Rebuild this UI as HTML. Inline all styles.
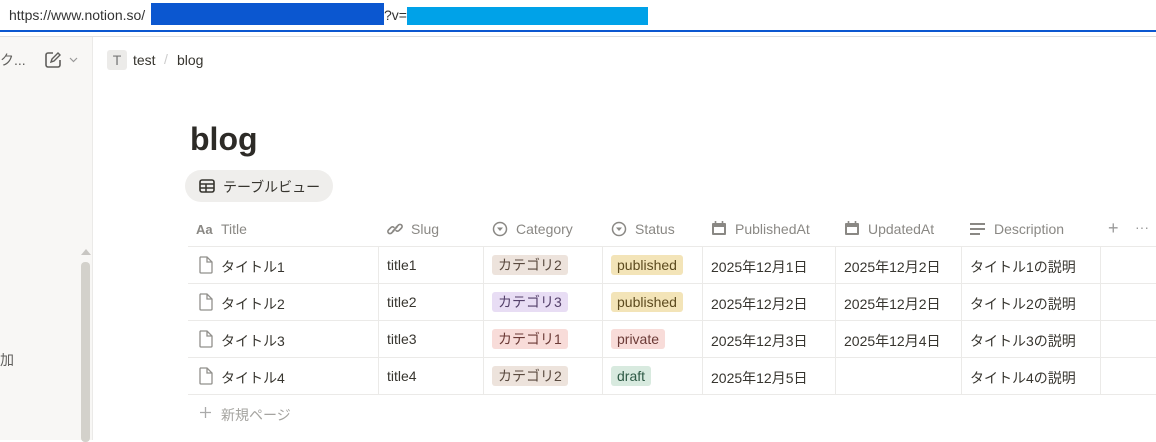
<!DOCTYPE html>
<html><head><meta charset="utf-8"><style>
*{margin:0;padding:0;box-sizing:border-box}
body{width:1156px;height:440px;overflow:hidden;background:#fff;font-family:"Liberation Sans","Noto Sans CJK JP",sans-serif;color:#37352f;position:relative}
.a{position:absolute}
.hd{color:#8a8884;font-size:14px}
.cell{position:absolute;font-size:14px;white-space:nowrap}
.tag{position:absolute;height:20px;line-height:20px;padding:0 6px;border-radius:3px;font-size:14px}
.hl{position:absolute;left:188px;right:0;height:1px;background:#ebeae8}
.vl{position:absolute;width:1px;background:#ebeae8;top:247px;height:147px}
</style></head><body>
<div class="a" style="left:9px;top:7px;font-size:14px;color:#333">https://www.notion.so/</div>
<div class="a" style="left:151px;top:3px;width:233px;height:22px;background:#0b57d0"></div>
<div class="a" style="left:384px;top:7px;font-size:14px;color:#333">?v=</div>
<div class="a" style="left:407px;top:7px;width:241px;height:18px;background:#00a2e8"></div>
<div class="a" style="left:0;top:30px;width:1156px;height:2px;background:#0b57d0"></div>
<div class="a" style="left:0;top:36px;width:1156px;height:1px;background:#e0e0e0"></div>
<div class="a" style="left:0;top:37px;width:93px;height:403px;background:#f8f7f5;border-right:1px solid #ebeae8"></div>
<div class="a" style="left:0;top:50px;font-size:14px;color:#5f5e5b">ク...</div>
<svg class="a" style="left:44px;top:51px" width="18" height="18" viewBox="0 0 18 18"><path d="M9 2H4a2 2 0 0 0-2 2v10a2 2 0 0 0 2 2h10a2 2 0 0 0 2-2V9" fill="none" stroke="#5f5e5b" stroke-width="1.6"/><path d="M7 11l1-3 6-6 2 2-6 6z" fill="none" stroke="#5f5e5b" stroke-width="1.4"/></svg>
<svg class="a" style="left:69px;top:57px" width="9" height="6"><path d="M1 1l3.5 3.5L8 1" fill="none" stroke="#999" stroke-width="1.2"/></svg>
<div class="a" style="left:81px;top:249px;width:0;height:0;border-left:5px solid transparent;border-right:5px solid transparent;border-bottom:6px solid #c8c6c2"></div>
<div class="a" style="left:81px;top:262px;width:9px;height:180px;background:#d3d1cb;border-radius:4px"></div>
<div class="a" style="left:0;top:350px;font-size:14px;color:#5f5e5b">加</div>
<div class="a" style="left:107px;top:50px;width:20px;height:20px;background:#ecebe9;border-radius:3px;font-size:14px;line-height:20px;text-align:center;color:#777">T</div>
<div class="a" style="left:133px;top:52px;font-size:14px">test</div>
<div class="a" style="left:164px;top:51px;font-size:14px;color:#ccc">/</div>
<div class="a" style="left:177px;top:52px;font-size:14px">blog</div>
<div class="a" style="left:190px;top:121px;font-size:32px;font-weight:bold;color:#2d2b27">blog</div>
<div class="a" style="left:185px;top:170px;width:148px;height:32px;background:#efeeec;border-radius:16px"></div>
<svg class="a" style="left:199px;top:179px" width="16" height="14" viewBox="0 0 16 14"><rect x="1" y="1" width="14" height="12" rx="2" fill="none" stroke="#37352f" stroke-width="1.6"/><path d="M1 5h14M1 9h14M7 5v8" stroke="#37352f" stroke-width="1.5"/></svg>
<div class="a" style="left:223px;top:177px;font-size:14px">テーブルビュー</div>
<div class="a" style="left:196px;top:222px;font-size:13px;font-weight:bold;color:#8a8884">Aa</div>
<div class="cell hd" style="left:221px;top:221px">Title</div>
<svg class="a" style="left:387px;top:221px" width="16" height="16" viewBox="0 0 16 16"><path d="M7 9.5l-2.5 2.5a2 2 0 0 1-3-3L4 6.5a2 2 0 0 1 3 0M9 6.5l2.5-2.5a2 2 0 0 1 3 3L12 9.5a2 2 0 0 1-3 0M6 10l4-4" fill="none" stroke="#8a8884" stroke-width="1.6" stroke-linecap="round"/></svg>
<div class="cell hd" style="left:411px;top:221px">Slug</div>
<svg class="a" style="left:492px;top:221px" width="16" height="16"><circle cx="8" cy="8" r="6.5" fill="none" stroke="#8a8884" stroke-width="1.5"/><path d="M5 6.5h6L8 10z" fill="#8a8884"/></svg>
<div class="cell hd" style="left:516px;top:221px">Category</div>
<svg class="a" style="left:611px;top:221px" width="16" height="16"><circle cx="8" cy="8" r="6.5" fill="none" stroke="#8a8884" stroke-width="1.5"/><path d="M5 6.5h6L8 10z" fill="#8a8884"/></svg>
<div class="cell hd" style="left:635px;top:221px">Status</div>
<svg class="a" style="left:711px;top:220px" width="16" height="16"><rect x="1" y="3" width="14" height="12" rx="1" fill="#8a8884"/><rect x="3" y="7" width="10" height="6" fill="#fff"/><path d="M4.5 1v3M11.5 1v3" stroke="#8a8884" stroke-width="1.6"/></svg>
<div class="cell hd" style="left:735px;top:221px">PublishedAt</div>
<svg class="a" style="left:844px;top:220px" width="16" height="16"><rect x="1" y="3" width="14" height="12" rx="1" fill="#8a8884"/><rect x="3" y="7" width="10" height="6" fill="#fff"/><path d="M4.5 1v3M11.5 1v3" stroke="#8a8884" stroke-width="1.6"/></svg>
<div class="cell hd" style="left:868px;top:221px">UpdatedAt</div>
<svg class="a" style="left:970px;top:222px" width="16" height="14"><path d="M0 2h15M0 7h15M0 12h10" stroke="#8a8884" stroke-width="2"/></svg>
<div class="cell hd" style="left:994px;top:221px">Description</div>
<div class="a" style="left:1108px;top:218px;font-size:18px;color:#999">+</div>
<div class="a" style="left:1135px;top:219px;font-size:14px;color:#999">···</div>
<div class="hl" style="top:246px"></div>
<div class="hl" style="top:283px"></div>
<div class="hl" style="top:320px"></div>
<div class="hl" style="top:357px"></div>
<div class="hl" style="top:394px"></div>
<div class="vl" style="left:378px"></div><div class="vl" style="left:483px"></div><div class="vl" style="left:602px"></div><div class="vl" style="left:702px"></div><div class="vl" style="left:835px"></div><div class="vl" style="left:961px"></div><div class="vl" style="left:1100px"></div>

<svg class="a" style="left:198px;top:256px" width="16" height="18"><path d="M2 1h7l5 5v10a1 1 0 0 1-1 1H3a1 1 0 0 1-1-1V2a1 1 0 0 1 1-1zM9 1v5h5" fill="none" stroke="#91908c" stroke-width="1.3"/></svg>
<svg class="a" style="left:198px;top:293px" width="16" height="18"><path d="M2 1h7l5 5v10a1 1 0 0 1-1 1H3a1 1 0 0 1-1-1V2a1 1 0 0 1 1-1zM9 1v5h5" fill="none" stroke="#91908c" stroke-width="1.3"/></svg>
<svg class="a" style="left:198px;top:330px" width="16" height="18"><path d="M2 1h7l5 5v10a1 1 0 0 1-1 1H3a1 1 0 0 1-1-1V2a1 1 0 0 1 1-1zM9 1v5h5" fill="none" stroke="#91908c" stroke-width="1.3"/></svg>
<svg class="a" style="left:198px;top:367px" width="16" height="18"><path d="M2 1h7l5 5v10a1 1 0 0 1-1 1H3a1 1 0 0 1-1-1V2a1 1 0 0 1 1-1zM9 1v5h5" fill="none" stroke="#91908c" stroke-width="1.3"/></svg>
<div class="cell" style="left:221px;top:257px">タイトル1</div>
<div class="cell" style="left:221px;top:294px">タイトル2</div>
<div class="cell" style="left:221px;top:331px">タイトル3</div>
<div class="cell" style="left:221px;top:368px">タイトル4</div>
<div class="cell" style="left:387px;top:257px">title1</div>
<div class="cell" style="left:387px;top:294px">title2</div>
<div class="cell" style="left:387px;top:331px">title3</div>
<div class="cell" style="left:387px;top:368px">title4</div>
<div class="tag" style="left:492px;top:255px;background:#ede3dc;color:#5a4a3f">カテゴリ2</div>
<div class="tag" style="left:492px;top:292px;background:#e8ddf4;color:#54406a">カテゴリ3</div>
<div class="tag" style="left:492px;top:329px;background:#f8dcd9;color:#6b3a36">カテゴリ1</div>
<div class="tag" style="left:492px;top:366px;background:#ede3dc;color:#5a4a3f">カテゴリ2</div>
<div class="tag" style="left:611px;top:255px;background:#f3e4b8;color:#5c4a1e">published</div>
<div class="tag" style="left:611px;top:292px;background:#f3e4b8;color:#5c4a1e">published</div>
<div class="tag" style="left:611px;top:329px;background:#f8dcd9;color:#6b3a36">private</div>
<div class="tag" style="left:611px;top:366px;background:#d8eadf;color:#2e5a45">draft</div>
<div class="cell" style="left:711px;top:257px">2025年12月1日</div>
<div class="cell" style="left:711px;top:294px">2025年12月2日</div>
<div class="cell" style="left:711px;top:331px">2025年12月3日</div>
<div class="cell" style="left:711px;top:368px">2025年12月5日</div>
<div class="cell" style="left:844px;top:257px">2025年12月2日</div>
<div class="cell" style="left:844px;top:294px">2025年12月2日</div>
<div class="cell" style="left:844px;top:331px">2025年12月4日</div>
<div class="cell" style="left:970px;top:257px">タイトル1の説明</div>
<div class="cell" style="left:970px;top:294px">タイトル2の説明</div>
<div class="cell" style="left:970px;top:331px">タイトル3の説明</div>
<div class="cell" style="left:970px;top:368px">タイトル4の説明</div>
<svg class="a" style="left:200px;top:407px" width="11" height="11"><path d="M5.5 0v11M0 5.5h11" stroke="#aaa" stroke-width="1.3"/></svg>
<div class="cell" style="left:221px;top:405px;color:#a5a4a0">新規ページ</div>
</body></html>
